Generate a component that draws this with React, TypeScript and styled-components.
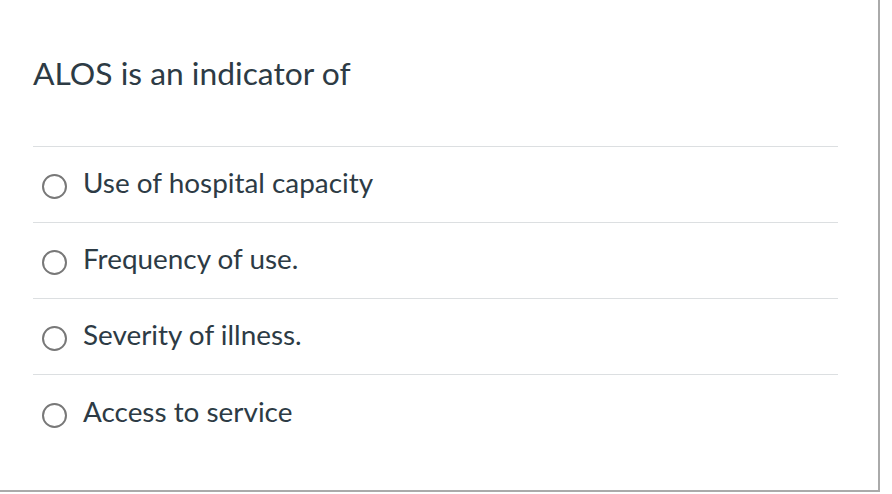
import React from "react";
import styled, { createGlobalStyle } from "styled-components";

const Global = createGlobalStyle`
  html, body { margin: 0; padding: 0; background: #ffffff; }
  body { font-family: Lato, "Noto Sans", sans-serif; }
`;

const Card = styled.div`
  box-sizing: border-box;
  width: 880px;
  height: 492px;
  border-right: 2px solid #aaaaaa;
  border-bottom: 2px solid #aaaaaa;
  background: #ffffff;
  padding: 0 40px 0 33px;
  color: #2d3b45;
`;

const Question = styled.div`
  height: 147px;
  box-sizing: border-box;
  padding-top: 54px;
  font-size: 31.8px;
  line-height: 38px;
  border-bottom: 1px solid #dcdfe1;
`;

const Answers = styled.div`
  display: flex;
  flex-direction: column;
`;

const Answer = styled.label<{ $last?: boolean }>`
  display: flex;
  align-items: center;
  gap: 16px;
  height: 76px;
  box-sizing: border-box;
  padding: 0 0 5px 9px;
  font-size: 27.9px;
  border-bottom: ${(p) => (p.$last ? "none" : "1px solid #dcdfe1")};
`;

const Radio = styled.span`
  display: inline-block;
  width: 25px;
  height: 25px;
  margin-top: 9px;
  box-sizing: border-box;
  border: 2px solid #787878;
  border-radius: 50%;
  flex: none;
`;

const answers = [
  "Use of hospital capacity",
  "Frequency of use.",
  "Severity of illness.",
  "Access to service",
];

export default function App() {
  return (
    <>
      <Global />
      <Card>
        <Question>ALOS is an indicator of</Question>
        <Answers>
          {answers.map((a, i) => (
            <Answer key={a} $last={i === answers.length - 1}>
              <Radio />
              {a}
            </Answer>
          ))}
        </Answers>
      </Card>
    </>
  );
}
